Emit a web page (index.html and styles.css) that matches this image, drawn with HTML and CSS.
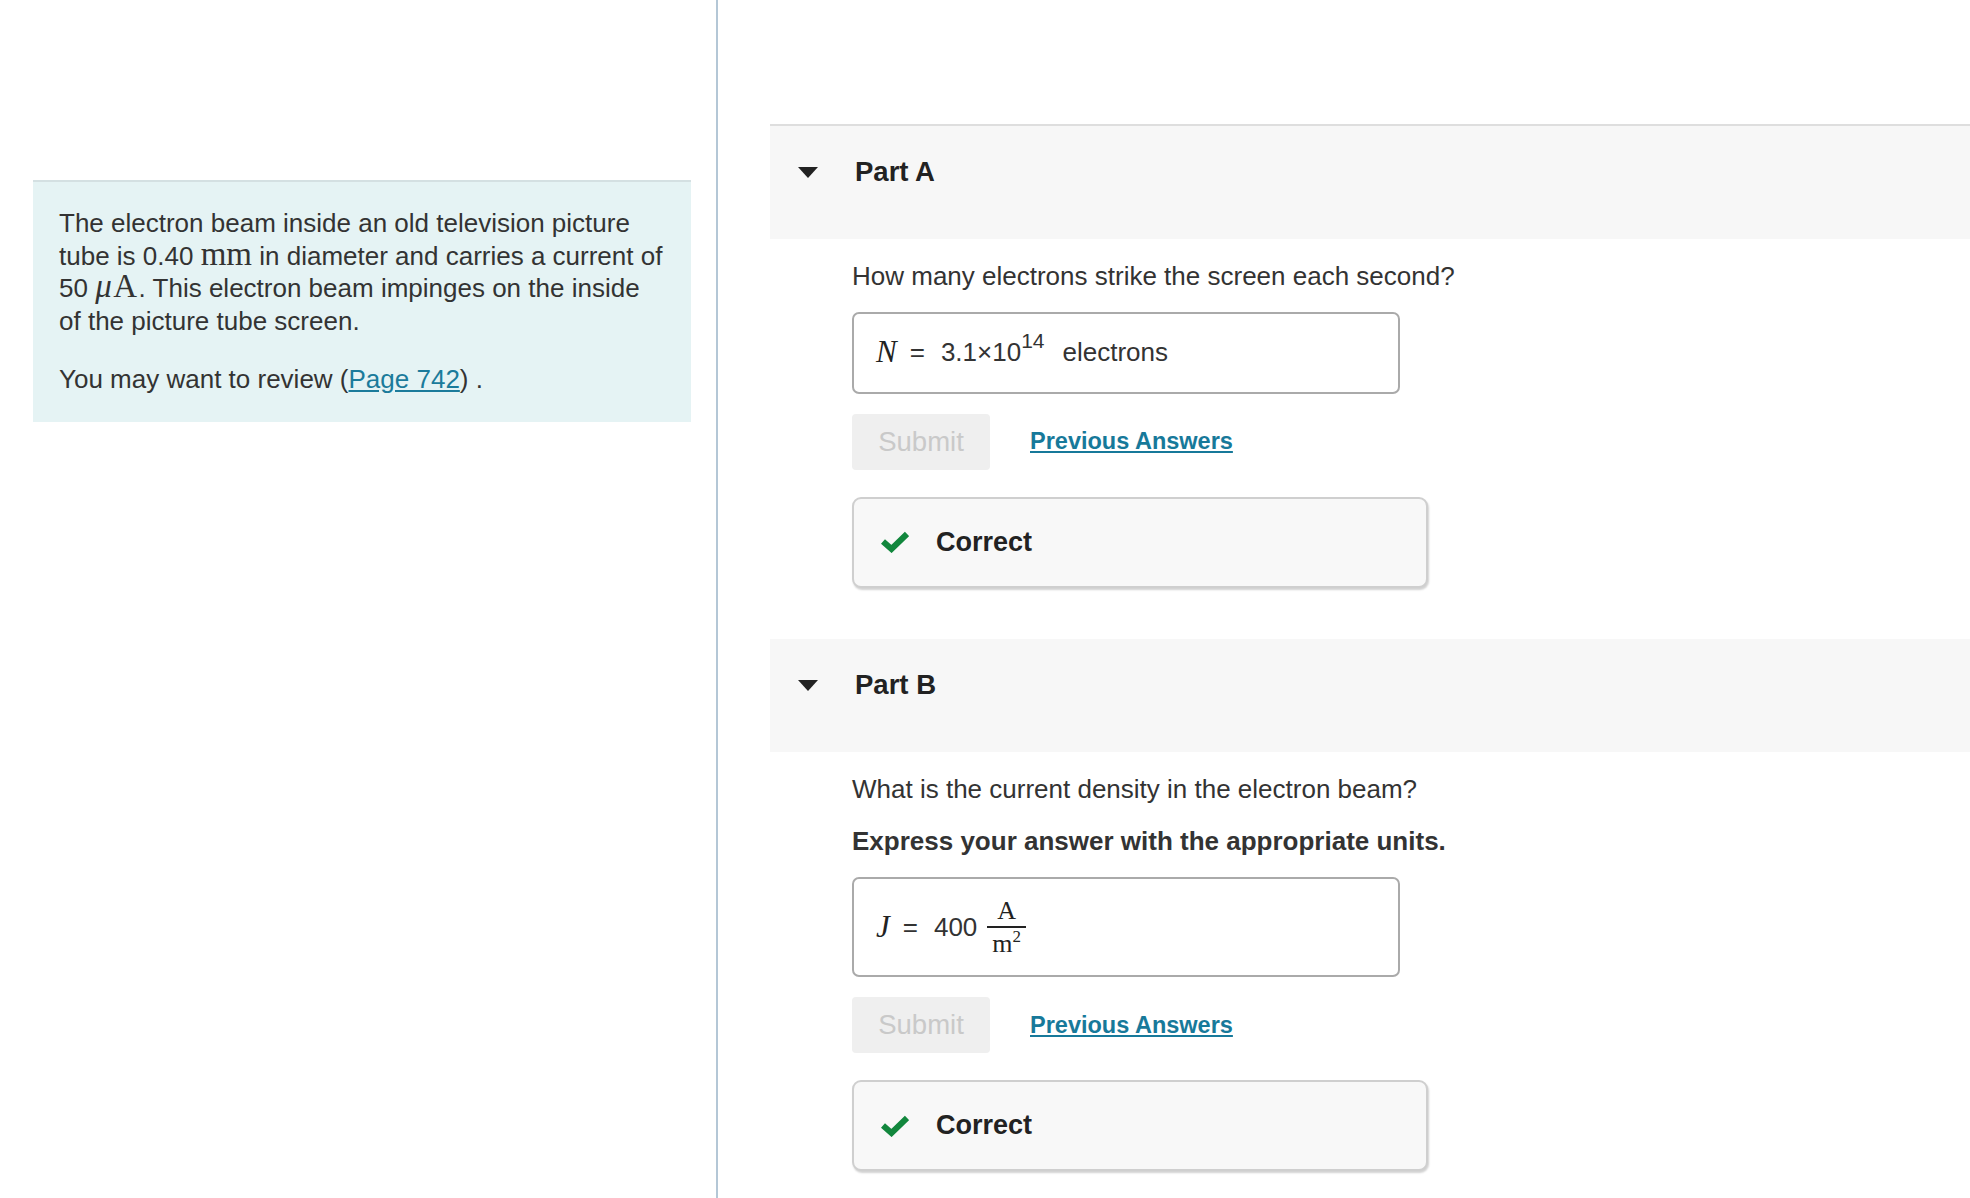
FILE: index.html
```html
<!DOCTYPE html>
<html>
<head>
    <title>Electron Beam - Current Density</title>
    <link rel="stylesheet" href="styles.css">
</head>
<body>
    <div class="page">
        <div class="sidebar">
            <div class="intro">
                <p>The electron beam inside an old television picture tube is 0.40 <span class="math">mm</span> in diameter and carries a current of 50 <span class="math micro"><i>μ</i>A</span>. This electron beam impinges on the inside of the picture tube screen.</p>
                <p>You may want to review (<a href="#">Page 742</a>) .</p>
            </div>
        </div>

        <div class="main">
            <div class="part part-first">
                <div class="part-header">
                    <span class="caret"></span>
                    <h2>Part A</h2>
                </div>
                <div class="part-body">
                    <p class="question">How many electrons strike the screen each second?</p>
                    <div class="answer-box">
                        <span class="var">N</span>
                        <span class="eq">=</span>
                        <span class="value">3.1×10<sup>14</sup></span>
                        <span class="unit">electrons</span>
                    </div>
                    <div class="actions">
                        <button class="submit" disabled>Submit</button>
                        <a href="#" class="prev">Previous Answers</a>
                    </div>
                    <div class="feedback">
                        <svg class="check" width="28" height="22" viewBox="0 0 28 22">
                            <polyline points="2,10.5 10.5,18 26,3" fill="none" stroke="#12873d" stroke-width="6"/>
                        </svg>
                        <span>Correct</span>
                    </div>
                </div>
            </div>

            <div class="part">
                <div class="part-header">
                    <span class="caret"></span>
                    <h2>Part B</h2>
                </div>
                <div class="part-body">
                    <p class="question">What is the current density in the electron beam?</p>
                    <p class="hint">Express your answer with the appropriate units.</p>
                    <div class="answer-box tall">
                        <span class="var">J</span>
                        <span class="eq">=</span>
                        <span class="value">400</span>
                        <span class="frac">
                            <span class="num">A</span>
                            <span class="den">m<sup>2</sup></span>
                        </span>
                    </div>
                    <div class="actions">
                        <button class="submit" disabled>Submit</button>
                        <a href="#" class="prev">Previous Answers</a>
                    </div>
                    <div class="feedback">
                        <svg class="check" width="28" height="22" viewBox="0 0 28 22">
                            <polyline points="2,10.5 10.5,18 26,3" fill="none" stroke="#12873d" stroke-width="6"/>
                        </svg>
                        <span>Correct</span>
                    </div>
                </div>
            </div>
        </div>
    </div>
</body>
</html>
```

FILE: styles.css
```css
body {
    margin: 0;
    background: #fff;
    color: #333;
    font-family: "Liberation Sans", Arial, Helvetica, sans-serif;
    font-size: 26px;
    line-height: 32.7px;
}

.page {
    display: flex;
    min-height: 100vh;
}

/* left column with the problem statement */
.sidebar {
    width: 658px;
    flex-shrink: 0;
    padding: 180px 25px 0 33px;
    border-right: 2px solid #b4c7d6;
}

.intro {
    background: #e5f3f4;
    border-top: 2px solid #d4e0e2;
    padding: 25px 26px 26px 26px;
}

.intro p {
    margin: 0 0 25px 0;
}

.intro p:last-child {
    margin-bottom: 0;
}

.intro a {
    color: #1b7b9b;
}

.math {
    font-family: "Liberation Serif", "Times New Roman", serif;
    font-size: 33px;
    line-height: 20px;
}

.micro {
    letter-spacing: 1.5px;
}

/* right column with the parts */
.main {
    flex: 1;
    padding-top: 124px;
}

.part {
    margin-left: 52px;
    margin-top: 51px;
}

.part-first {
    margin-top: 0;
}

.part-header {
    display: flex;
    align-items: flex-start;
    background: #f7f7f7;
    padding: 30px 0 51px 28px;
}

.part-first .part-header {
    border-top: 2px solid #dedede;
}

.caret {
    width: 0;
    height: 0;
    margin-top: 11px;
    border-left: 10px solid transparent;
    border-right: 10px solid transparent;
    border-top: 11px solid #222;
}

.part-header h2 {
    margin: 0 0 0 37px;
    font-size: 27.5px;
    line-height: 32px;
    color: #222;
}

.part-body {
    padding-left: 82px;
}

.question {
    margin: 0;
    padding-top: 21px;
}

.hint {
    margin: 20px 0 0 0;
    font-weight: bold;
}

.answer-box {
    display: flex;
    align-items: center;
    width: 522px;
    height: 78px;
    margin-top: 19px;
    padding-left: 22px;
    border: 2px solid #aaa;
    border-radius: 7px;
}

.answer-box.tall {
    height: 96px;
}

.var {
    font-family: "Liberation Serif", "Times New Roman", serif;
    font-style: italic;
    font-size: 31px;
    color: #222;
}

.eq {
    margin-left: 13px;
}

.value {
    margin-left: 16px;
}

.value sup {
    font-size: 21px;
    line-height: 0;
    vertical-align: 13px;
}

.unit {
    margin-left: 18px;
}

.frac {
    display: inline-flex;
    flex-direction: column;
    align-items: center;
    margin-left: 10px;
    font-family: "Liberation Serif", "Times New Roman", serif;
    font-size: 26px;
    line-height: 25px;
    color: #222;
}

.frac .num {
    align-self: stretch;
    text-align: center;
    padding: 0 0 3px;
    border-bottom: 2px solid #222;
}

.frac .den {
    padding: 3px 5px 0;
}

.frac sup {
    font-size: 17px;
    line-height: 0;
    vertical-align: 10px;
}

.actions {
    display: flex;
    align-items: center;
    margin-top: 20px;
}

.submit {
    width: 138px;
    height: 56px;
    padding: 0;
    background: #efefef;
    color: #c9c9c9;
    border: none;
    border-radius: 4px;
    font-family: "Liberation Sans", Arial, sans-serif;
    font-size: 27.5px;
}

.prev {
    margin-left: 40px;
    color: #17799a;
    font-size: 23.5px;
    font-weight: bold;
}

.feedback {
    display: flex;
    align-items: center;
    width: 545px;
    height: 87px;
    margin-top: 27px;
    padding-left: 27px;
    background: #f8f8f8;
    border: 2px solid #cfcfcf;
    border-radius: 9px;
    box-shadow: 1px 2px 2px rgba(0, 0, 0, 0.18);
    font-size: 27px;
    font-weight: bold;
    color: #222;
}

.feedback .check {
    margin-right: 27px;
}
```
